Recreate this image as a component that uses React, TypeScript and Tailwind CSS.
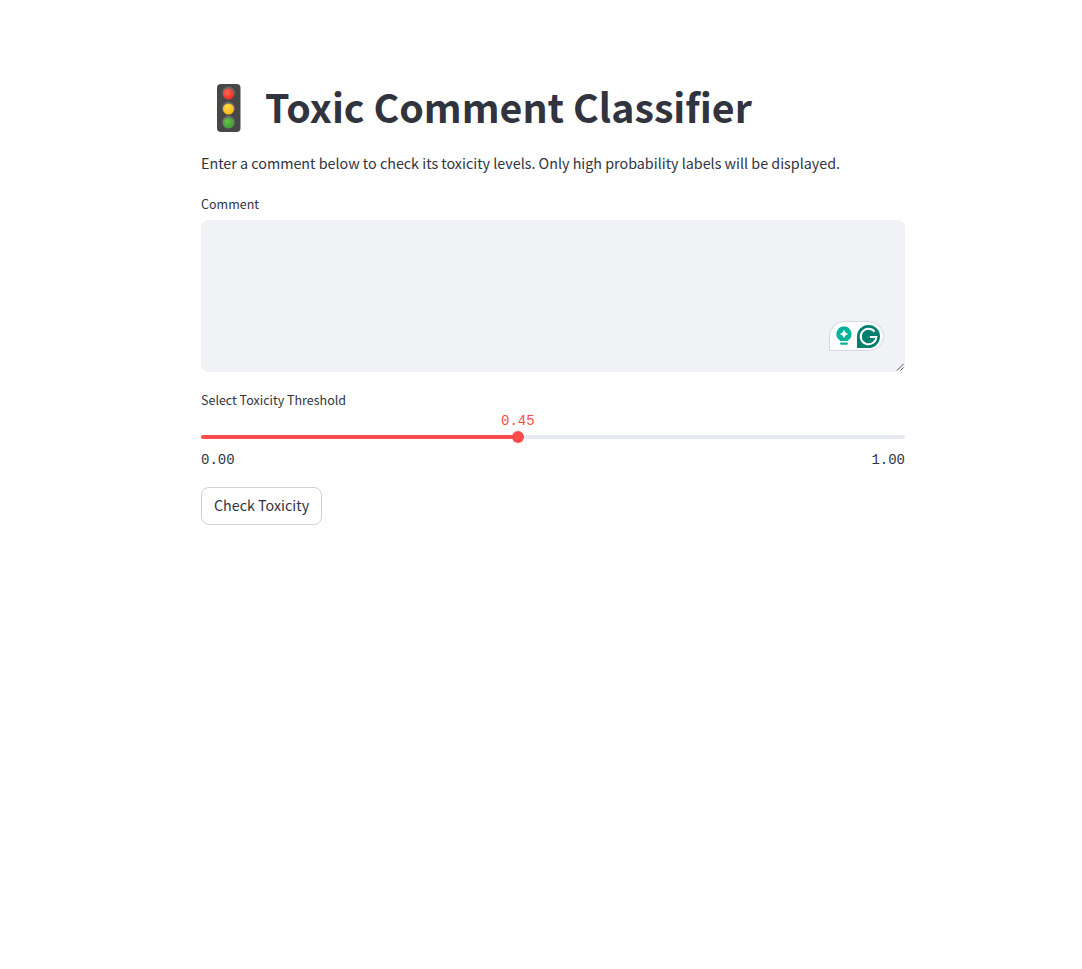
const sans = { fontFamily: '"Noto Sans CJK SC", "Noto Sans", sans-serif' };

function TrafficLight() {
  return (
    <svg width="44" height="52" viewBox="0 0 44 52" className="shrink-0">
      <defs>
        <radialGradient id="r" cx="0.4" cy="0.35" r="0.7"><stop offset="0" stopColor="#ff6a55" /><stop offset="1" stopColor="#e8281c" /></radialGradient>
        <radialGradient id="y" cx="0.4" cy="0.35" r="0.7"><stop offset="0" stopColor="#ffdc4a" /><stop offset="1" stopColor="#f6b410" /></radialGradient>
        <radialGradient id="g" cx="0.4" cy="0.35" r="0.7"><stop offset="0" stopColor="#6cc04a" /><stop offset="1" stopColor="#3c9a38" /></radialGradient>
      </defs>
      <rect x="16" y="2" width="23.5" height="48" rx="4" fill="#474747" />
      <circle cx="27.5" cy="11" r="6.4" fill="#696969" />
      <circle cx="27.5" cy="26" r="6.4" fill="#696969" />
      <circle cx="27.5" cy="40" r="6.4" fill="#696969" />
      <circle cx="27.5" cy="12" r="5.5" fill="url(#r)" />
      <circle cx="27.5" cy="27" r="5.5" fill="url(#y)" />
      <circle cx="27.5" cy="41" r="5.5" fill="url(#g)" />
    </svg>
  );
}

function GrammarlyBadge() {
  return (
    <div className="absolute right-[21px] bottom-[21px] flex h-[30px] w-[55px] items-center justify-between rounded-r-[15px] rounded-tl-[15px] border border-[#d5d8e2] bg-white pl-[6px] pr-[3px]">
      <svg width="16" height="20" viewBox="0 0 16 20">
        <path d="M8 0.5a7.5 7.5 0 0 1 4.2 13.7v0.8H3.8v-0.8A7.5 7.5 0 0 1 8 0.5z" fill="#00b39b" />
        <path d="M8 4.5l1.2 2.3 2.3 1.2-2.3 1.2L8 11.5 6.8 9.2 4.5 8l2.3-1.2z" fill="#fff" stroke="#fff" strokeWidth="0.8" />
        <rect x="4" y="16.5" width="8" height="2.2" rx="1.1" fill="#00b39b" />
      </svg>
      <svg width="23" height="23" viewBox="0 0 23 23">
        <path d="M11.5 0a11.5 11.5 0 0 1 0 23H0V11.5A11.5 11.5 0 0 1 11.5 0z" fill="#027e6f" />
        <path d="M17.6 6.6a7.8 7.8 0 1 0 1.7 5.4h-6.4" fill="none" stroke="#fff" strokeWidth="2" />
      </svg>
    </div>
  );
}

export default function App() {
  return (
    <div className="min-h-[969px] bg-white text-[#31333f]" style={sans}>
      <div className="ml-[201px] w-[704px] pt-[78px]">
        <div className="flex h-[60px] items-center">
          <TrafficLight />
          <h1 className="mb-[4px] ml-[20px] text-[39.3px] leading-[60px] font-bold">Toxic Comment Classifier</h1>
        </div>
        <p className="mt-[12px] text-[14.32px] leading-[26px]">
          Enter a comment below to check its toxicity levels. Only high probability labels will be displayed.
        </p>

        <label className="mt-[18px] block text-[12.5px] leading-[20px]">Comment</label>
        <div className="relative mt-[6px] h-[152px] rounded-lg bg-[#f0f2f6]">
          <GrammarlyBadge />
          <svg width="8" height="8" viewBox="0 0 8 8" className="absolute right-[1px] bottom-[1px]">
            <path d="M1 7.5L7.5 1M4.5 7.5L7.5 4.5" stroke="#555" strokeWidth="1" />
          </svg>
        </div>

        <label className="mt-[18px] block text-[12.5px] leading-[20px]">Select Toxicity Threshold</label>
        <div className="relative mt-[25px] h-[4px] rounded-full bg-[#e6eaf1]">
          <div className="h-full w-[317px] rounded-l-full bg-[#ff4b4b]" />
          <div className="absolute top-[-4px] left-[311px] h-[12px] w-[12px] rounded-full bg-[#ff4b4b]" />
          <span className="absolute top-[-24px] left-[300px] font-['Liberation_Mono',monospace] text-[14px] leading-[20px] text-[#ff4b4b]">0.45</span>
        </div>
        <div className="mt-[11px] flex justify-between font-['Liberation_Mono',monospace] text-[14px] leading-[20px]">
          <span>0.00</span>
          <span>1.00</span>
        </div>

        <button className="mt-[17px] h-[38px] rounded-lg border border-[#d0d1d6] bg-white px-[12px] pb-[2px] text-[14.3px] leading-[24px]">
          Check Toxicity
        </button>
      </div>
    </div>
  );
}
